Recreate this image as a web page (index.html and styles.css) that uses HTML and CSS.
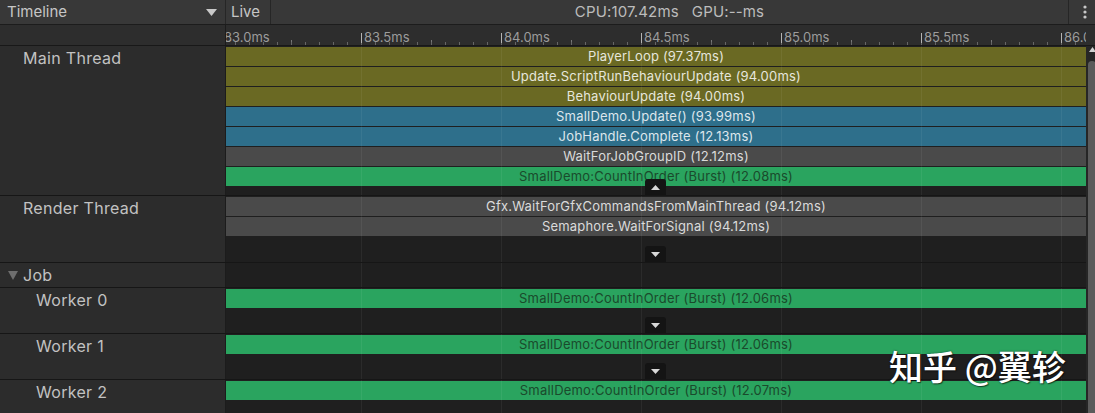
FILE: index.html
```html
<!DOCTYPE html>
<html>
<head>
<meta charset="utf-8">
<link rel="stylesheet" href="styles.css">
</head>
<body>
<div class="app">
  <div class="toolbar">
    <div class="tb-dropdown">
      <span>Timeline</span>
      <svg class="caret" width="11" height="7" viewBox="0 0 11 7"><path d="M0 0H11L5.5 7Z" fill="#c8c8c8"/></svg>
    </div>
    <div class="tb-live">Live</div>
    <div class="tb-stats">CPU:107.42ms&nbsp;&nbsp;&nbsp;GPU:--ms</div>
    <div class="tb-menu">
      <svg width="4" height="14" viewBox="0 0 4 14"><circle cx="2" cy="2" r="1.6" fill="#c8c8c8"/><circle cx="2" cy="7" r="1.6" fill="#c8c8c8"/><circle cx="2" cy="12" r="1.6" fill="#c8c8c8"/></svg>
    </div>
  </div>

  <div class="ruler-row">
    <div class="label-cell"></div>
    <div class="ruler">
      <div class="ruler-inner">
        <div class="seg">83.0ms</div>
        <div class="seg">83.5ms</div>
        <div class="seg">84.0ms</div>
        <div class="seg">84.5ms</div>
        <div class="seg">85.0ms</div>
        <div class="seg">85.5ms</div>
        <div class="seg">86.0ms</div>
      </div>
    </div>
    <div class="ruler-end"></div>
  </div>

  <div class="body">
    <div class="groups">
      <div class="group g-main">
        <div class="label">Main Thread</div>
        <div class="track">
          <div class="bar olive">PlayerLoop (97.37ms)</div>
          <div class="bar olive">Update.ScriptRunBehaviourUpdate (94.00ms)</div>
          <div class="bar olive">BehaviourUpdate (94.00ms)</div>
          <div class="bar blue">SmallDemo.Update() (93.99ms)</div>
          <div class="bar blue">JobHandle.Complete (12.13ms)</div>
          <div class="bar grey">WaitForJobGroupID (12.12ms)</div>
          <div class="bar green">SmallDemo:CountInOrder (Burst) (12.08ms)</div>
          <div class="expand"><svg width="9" height="5" viewBox="0 0 9 5"><path d="M0 5H9L4.5 0Z" fill="#d8d8d8"/></svg></div>
        </div>
      </div>

      <div class="group g-render">
        <div class="label">Render Thread</div>
        <div class="track">
          <div class="bar grey">Gfx.WaitForGfxCommandsFromMainThread (94.12ms)</div>
          <div class="bar grey">Semaphore.WaitForSignal (94.12ms)</div>
          <div class="expand"><svg width="9" height="5" viewBox="0 0 9 5"><path d="M0 0H9L4.5 5Z" fill="#d8d8d8"/></svg></div>
        </div>
      </div>

      <div class="group g-job">
        <div class="label job-label">
          <svg class="fold" width="10" height="9" viewBox="0 0 10 9"><path d="M0 0H10L5 9Z" fill="#6e6e6e"/></svg>
          <span>Job</span>
        </div>
        <div class="track"></div>
      </div>

      <div class="group g-worker">
        <div class="label worker">Worker 0</div>
        <div class="track">
          <div class="bar green">SmallDemo:CountInOrder (Burst) (12.06ms)</div>
          <div class="expand"><svg width="9" height="5" viewBox="0 0 9 5"><path d="M0 0H9L4.5 5Z" fill="#d8d8d8"/></svg></div>
        </div>
      </div>

      <div class="group g-worker">
        <div class="label worker">Worker 1</div>
        <div class="track">
          <div class="bar green">SmallDemo:CountInOrder (Burst) (12.06ms)</div>
          <div class="expand"><svg width="9" height="5" viewBox="0 0 9 5"><path d="M0 0H9L4.5 5Z" fill="#d8d8d8"/></svg></div>
        </div>
      </div>

      <div class="group g-worker">
        <div class="label worker">Worker 2</div>
        <div class="track">
          <div class="bar green">SmallDemo:CountInOrder (Burst) (12.07ms)</div>
        </div>
      </div>
    </div>

    <div class="scrollbar">
      <svg class="sb-arrow" width="7" height="5" viewBox="0 0 7 5"><path d="M0 5H7L3.5 0Z" fill="#d0d0d0"/></svg>
      <div class="sb-thumb"></div>
    </div>
  </div>

  <div class="watermark">知乎 @翼轸</div>
</div>
</body>
</html>
```

FILE: styles.css
```css
* { box-sizing: border-box; }

html, body {
  margin: 0;
  padding: 0;
}

body {
  width: 1095px;
  height: 413px;
  overflow: hidden;
  background: #1f1f1f;
  font-family: Inter, "Noto Sans", "DejaVu Sans", sans-serif;
}

.app {
  position: relative;
  width: 1095px;
  height: 413px;
  overflow: hidden;
  background: #1f1f1f;
}

/* ---------- toolbar ---------- */
.toolbar {
  display: flex;
  height: 25px;
  background: #383838;
  border-bottom: 1px solid #1c1c1c;
  color: #c6c6c6;
  font-size: 15px;
  line-height: 24px;
}

.tb-dropdown {
  width: 226px;
  flex: none;
  display: flex;
  align-items: center;
  justify-content: space-between;
  padding: 0 8px 0 7px;
  border-right: 1px solid #262626;
}

.caret { display: block; }

.tb-live {
  width: 45px;
  flex: none;
  padding-left: 5px;
  border-right: 1px solid #262626;
}

.tb-stats {
  flex: 1;
  text-align: center;
  color: #bcbcbc;
  letter-spacing: 0.15px;
}

.tb-menu {
  width: 27px;
  flex: none;
  border-left: 1px solid #262626;
  display: flex;
  align-items: center;
  justify-content: flex-end;
  padding-right: 8px;
}

/* ---------- ruler ---------- */
.ruler-row {
  display: flex;
  height: 21px;
  background: #2d2d2d;
  border-bottom: 1px solid #181818;
}

.label-cell {
  width: 226px;
  flex: none;
  border-right: 1px solid #1c1c1c;
}

.ruler {
  width: 860px;
  flex: none;
  overflow: hidden;
}

.ruler-inner {
  display: flex;
  margin-left: -5px;
}

.seg {
  width: 140px;
  height: 20px;
  flex: none;
  padding: 5px 0 0 3px;
  font-size: 13px;
  line-height: 14px;
  color: #9c9c9c;
  white-space: nowrap;
  background-image:
    linear-gradient(#b4b4b4, #b4b4b4),
    repeating-linear-gradient(to right, #666 0 1px, transparent 1px 14px),
    repeating-linear-gradient(to right, #777 0 1px, transparent 1px 70px);
  background-size: 1px 10px, 100% 3px, 100% 5px;
  background-position: 0 8px, 0 100%, 0 100%;
  background-repeat: no-repeat, no-repeat, no-repeat;
}

.ruler-end {
  flex: 1;
}

/* ---------- body ---------- */
.body {
  display: flex;
}

.groups {
  width: 1086px;
  flex: none;
}

.group {
  display: flex;
  border-bottom: 1px solid #161616;
}

.g-main { height: 150px; }
.g-render { height: 67px; }
.g-job { height: 25px; }
.g-worker { height: 46px; }

.label {
  width: 226px;
  flex: none;
  background: #2c2c2c;
  border-right: 1px solid #1c1c1c;
  color: #c2c2c2;
  font-size: 16px;
  letter-spacing: 0.3px;
  line-height: 24px;
  padding-left: 23px;
  white-space: nowrap;
}

.label.worker { padding-left: 36px; }

.job-label {
  display: flex;
  align-items: center;
  height: 24px;
  padding-left: 8px;
  gap: 5px;
}

.fold { display: block; }

.track {
  position: relative;
  flex: 1;
  background: #1f1f1f;
}

.track::after {
  content: "";
  position: absolute;
  inset: 0;
  pointer-events: none;
  background: repeating-linear-gradient(to right,
    transparent 0 135px,
    rgba(255, 255, 255, 0.055) 135px 136px,
    transparent 136px 140px);
}

.bar {
  height: 19px;
  margin-top: 1px;
  font-size: 13px;
  letter-spacing: 0.2px;
  line-height: 19px;
  text-align: center;
  white-space: nowrap;
  overflow: hidden;
}

.olive { background: #6a6923; color: #e6e6dc; }
.blue  { background: #2e6f8b; color: #dde6ec; }
.grey  { background: #4a4a4a; color: #dadada; }
.green { background: #2aa45f; color: #1a4a2c; }

.expand {
  position: absolute;
  left: 50%;
  bottom: 0;
  width: 21px;
  height: 16px;
  margin-left: -11px;
  background: #141414;
  border-radius: 3px 3px 0 0;
  display: flex;
  align-items: center;
  justify-content: center;
  z-index: 1;
}

.expand svg { display: block; }

/* ---------- scrollbar ---------- */
.scrollbar {
  width: 9px;
  flex: none;
  background: #262626;
  position: relative;
  height: 368px;
}

.sb-arrow {
  display: block;
  margin: 1px 0 0 3px;
}

.sb-thumb {
  margin: 9px 0 0 2px;
  width: 8px;
  height: 360px;
  border-radius: 4px;
  background: #5b5b5b;
}

/* ---------- watermark ---------- */
.watermark {
  position: absolute;
  left: 889px;
  top: 345px;
  font-family: "Noto Sans CJK SC", "Noto Sans", sans-serif;
  font-size: 34px;
  line-height: 42px;
  font-weight: 500;
  color: #ffffff;
  text-shadow: 0 0 2px rgba(0, 0, 0, 0.6), 1px 1px 1px rgba(0, 0, 0, 0.5);
  white-space: nowrap;
  pointer-events: none;
}
```
